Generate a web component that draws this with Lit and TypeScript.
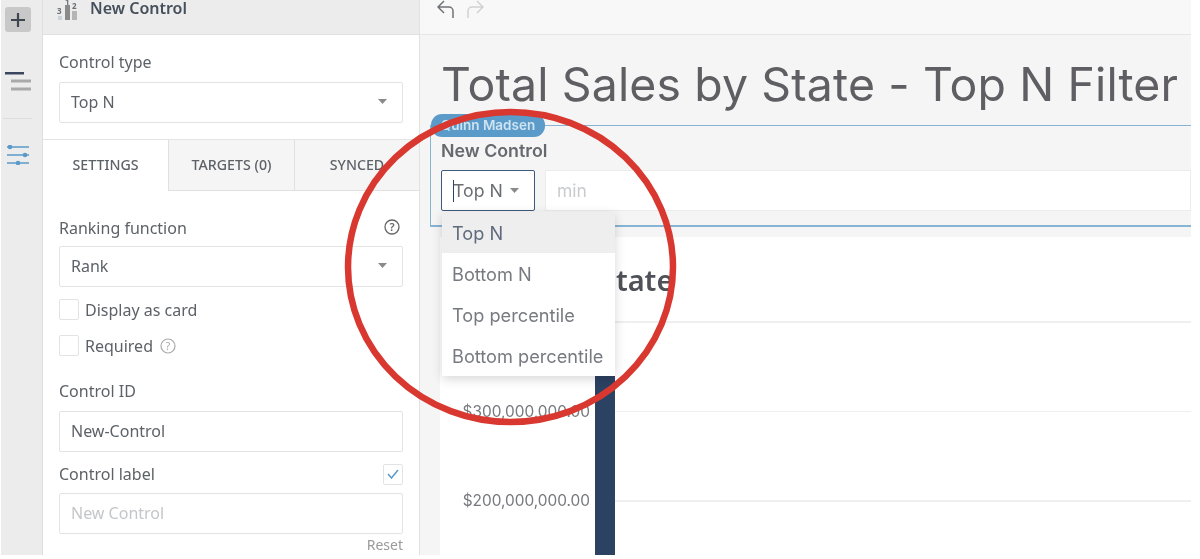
import { LitElement, html, css } from "lit";
import { customElement } from "lit/decorators.js";

const chevron = html`<svg class="caret" width="9" height="5" viewBox="0 0 9 5"><path d="M0 0h9L4.500 5z" fill="#8a8a8a"/></svg>`;

@customElement("app-root")
export class AppRoot extends LitElement {
  static styles = css`
    :host { display: block; width: 1200px; height: 559px; background: #fff; overflow: hidden; }
    * { box-sizing: border-box; }
    .page { position: relative; width: 1191px; height: 555px; display: grid; grid-template-columns: 43px 377px 771px; overflow: hidden; filter: blur(0.45px); font-family: "Noto Sans", sans-serif; color: #5f6368; }

    .rail { margin-left: 1px; background: #ececec; border-right: 1px solid #dfdfdf; display: flex; flex-direction: column; align-items: flex-start; padding: 7px 0 0 4px; }
    .plus { width: 26px; height: 25px; border-radius: 3px; background: #c8c8c8; display: flex; align-items: center; justify-content: center; }
    .rail-ic { display: block; margin-top: 40px; }
    .rail-sep { width: 29px; height: 1px; background: #dcdcdc; margin: 26px 0 0 -2px; }
    .rail-ic2 { display: block; margin: 26px 0 0 2px; }

    .panel { background: #fff; border-right: 1px solid #e2e2e2; display: flex; flex-direction: column; }
    .phead { height: 35px; flex: none; background: #ececec; border-bottom: 1px solid #e0e0e0; display: flex; align-items: flex-start; padding-left: 14px; gap: 12px; }
    .phead svg { margin-top: -1px; }
    .phead span { font-size: 16px; font-weight: 600; color: #46505c; line-height: 17px; }
    .sect { padding: 0 16px; display: flex; flex-direction: column; }
    .lab { font-size: 16px; line-height: 20px; color: #5d6268; }
    .field { height: 41px; border: 1px solid #e3e3e3; border-radius: 2px; display: flex; align-items: center; justify-content: space-between; padding: 0 11px 2px; font-size: 16px; color: #5d6268; background: #fff; }
    .caret { flex: none; margin-right: 4px; }
    .ph { color: #c4c6c9; }
    .top { padding-top: 17px; padding-bottom: 16px; gap: 10px; border-bottom: 1px solid #e4e4e4; height: 105px; }
    .tabs { display: grid; grid-template-columns: 125px 126px 125px; height: 51px; flex: none; font-size: 14.2px; font-weight: 500; }
    .tab { display: flex; align-items: center; justify-content: center; background: #f5f5f5; border-bottom: 1px solid #e0e0e0; border-left: 1px solid #e0e0e0; color: #5d6268; padding-bottom: 2px; }
    .tab.on { background: #fff; border: 0; }
    .body { padding-top: 27px; }
    .lab-row { display: flex; justify-content: space-between; align-items: center; height: 20px; }
    .help { margin-right: 2px; }
    .check { display: flex; align-items: center; gap: 6px; font-size: 16px; color: #5d6268; height: 21px; line-height: 20px; }
    .box { width: 20px; height: 21px; border: 1px solid #e3e3e3; border-radius: 2px; background: #fff; display: flex; align-items: center; justify-content: center; flex: none; }
    .g1 { margin-top: 8px; }
    .checks { margin-top: 12px; display: flex; flex-direction: column; gap: 15px; }
    .idlab { margin-top: 25px; margin-bottom: 10px; }
    .cl { margin-top: 12px; margin-bottom: 9px; }
    .reset { align-self: flex-end; font-size: 14px; color: #9a9a9a; line-height: 16px; margin-top: 3px; }

    .main { background: #f5f5f5; display: flex; flex-direction: column; font-family: Inter, sans-serif; min-width: 0; }
    .tool { height: 35px; flex: none; background: #f8f8f8; border-bottom: 1px solid #e6e6e6; display: flex; gap: 11px; padding: 0 0 0 17px; align-items: flex-start; }
    .title { font-size: 46.4px; font-weight: 400; line-height: 52px; color: #5f5f63; margin: 23px 0 0 21px; white-space: nowrap; letter-spacing: 0.15px; }
    .ctl { margin: 15px 0 0 10px; height: 102px; border: 1px solid #86b4d4; border-width: 2px 0 2px 1px; border-top-width: 1px; position: relative; padding: 15px 0 0 10px; }
    .badge { position: absolute; left: 0; top: -12px; width: 114px; height: 23px; background: #5a9bc9; border-radius: 11px; color: #cfe3f1; font-size: 13.5px; font-weight: 600; line-height: 22px; text-align: center; white-space: nowrap; }
    .cname { font-size: 17.8px; font-weight: 600; line-height: 19px; color: #66696e; }
    .inputs { display: flex; gap: 10px; margin-top: 10px; }
    .sel { width: 94px; height: 41px; background: #fff; border: 1px solid #3f5a7d; border-radius: 2px; font-size: 17.7px; color: #6a6e73; display: flex; align-items: center; gap: 7px; padding-left: 11px; position: relative; }
    .sel .cursor { position: absolute; left: 11px; top: 9px; width: 1px; height: 22px; background: #2c4263; }
    .sel .caret { margin: 0; }
    .minp { flex: 1; height: 41px; background: #fff; border: 1px solid #ececec; font-size: 17.5px; color: #c9cbce; display: flex; align-items: center; padding-left: 11px; }
    .card { margin: 10px 0 0 20px; flex: 1; background: #fff; padding: 23px 0 0 0; position: relative; min-height: 0; overflow: hidden; }
    .ctitle { font-family: "Noto Sans", sans-serif; font-size: 29px; font-weight: 600; line-height: 40px; color: #4e5258; padding-left: 39px; white-space: nowrap; }
    .plot { margin-top: 21px; display: flex; flex-direction: column; position: relative; }
    .row { height: 89.5px; display: grid; grid-template-columns: 150px 1fr; column-gap: 5px; align-items: start; }
    .row span { font-size: 15.4px; line-height: 18px; color: #77797d; text-align: right; margin-top: -8px; }
    .row i { display: block; height: 1.5px; background: #efefef; }
    .bar { position: absolute; left: 155px; top: 55px; width: 20px; height: 200px; background: #2c4263; }

    .menu { position: absolute; left: 442px; top: 212px; width: 173px; height: 164px; background: #fff; box-shadow: 0 3px 10px rgba(0,0,0,.16); font-family: Inter, sans-serif; font-size: 18.2px; color: #777a80; }
    .menu div { height: 41px; display: flex; align-items: center; padding-left: 10px; white-space: nowrap; }
    .menu div.on { background: #eeeeee; color: #5f6a7d; }
    .ring { position: absolute; left: 0; top: 0; pointer-events: none; }
  `;

  render() {
    return html`<div class="page">
      <nav class="rail">
        <div class="plus"><svg width="14" height="14" viewBox="0 0 14 14"><path d="M7 0v14M0 7h14" stroke="#3f4650" stroke-width="2.2"/></svg></div>
        <svg class="rail-ic" width="28" height="20" viewBox="0 0 28 20"><path d="M0 1h19" stroke="#3a4660" stroke-width="3"/><path d="M6 9h20M6 17h20" stroke="#a9a9a9" stroke-width="3"/></svg>
        <div class="rail-sep"></div>
        <svg class="rail-ic2" width="24" height="20" viewBox="0 0 24 20" fill="none" stroke="#5a9bc9" stroke-width="1.6"><path d="M0 2h22M0 10h22M0 18h22"/><circle cx="3" cy="2" r="1.5" fill="#5a9bc9"/><circle cx="18" cy="10" r="1.5" fill="#5a9bc9"/><circle cx="11" cy="18" r="1.500" fill="#5a9bc9"/></svg>
      </nav>

      <aside class="panel">
        <header class="phead">
          <svg width="21" height="21" viewBox="0 0 21 21"><g fill="#6b7076" font-family="Noto Sans, sans-serif" font-size="8" font-weight="700"><text x="0" y="15">3</text><text x="8" y="6">1</text><text x="15" y="10">2</text></g><rect x="8" y="6" width="5" height="15" fill="#8a8a8a"/><rect x="15" y="12" width="5" height="9" fill="#b5b5b5"/><rect x="1" y="17" width="4" height="4" fill="#c9d4dc"/></svg>
          <span>New Control</span>
        </header>
        <div class="sect top">
          <div class="lab">Control type</div>
          <div class="field">Top N ${chevron}</div>
        </div>
        <div class="tabs">
          <div class="tab on">SETTINGS</div>
          <div class="tab">TARGETS (0)</div>
          <div class="tab">SYNCED</div>
        </div>
        <div class="sect body">
          <div class="lab-row"><span class="lab">Ranking function</span>
            <svg class="help" width="18" height="18" viewBox="0 0 18 18" fill="none"><circle cx="9" cy="8" r="7" stroke="#666" stroke-width="1.3"/><text x="9" y="12" text-anchor="middle" font-size="11" font-weight="600" fill="#666" font-family="Noto Sans, sans-serif">?</text></svg>
          </div>
          <div class="field g1">Rank ${chevron}</div>
          <div class="checks">
            <div class="check"><span class="box"></span>Display as card</div>
            <div class="check"><span class="box"></span>Required
              <svg width="18" height="18" viewBox="0 0 18 18" fill="none"><circle cx="9" cy="9" r="7" stroke="#aaa" stroke-width="1.2"/><text x="9" y="13" text-anchor="middle" font-size="11" fill="#aaa" font-family="Noto Sans, sans-serif">?</text></svg>
            </div>
          </div>
          <div class="lab idlab">Control ID</div>
          <div class="field">New-Control</div>
          <div class="lab-row cl"><span class="lab">Control label</span>
            <span class="box"><svg width="12" height="10" viewBox="0 0 12 10" fill="none"><path d="M1 5l3.5 4L11 1" stroke="#5a9bc9" stroke-width="1.5"/></svg></span>
          </div>
          <div class="field ph">New Control</div>
          <div class="reset">Reset</div>
        </div>
      </aside>

      <main class="main">
        <div class="tool">
          <svg width="18" height="20" viewBox="0 0 18 20" fill="none" stroke="#6f7276" stroke-width="1.5"><path d="M7 1L1 7l6 6M1 7h11a4 4 0 0 1 4 4v7"/></svg>
          <svg width="18" height="20" viewBox="0 0 18 20" fill="none" stroke="#cfd1d3" stroke-width="1.5"><path d="M11 1l6 6-6 6M17 7H6a4 4 0 0 0-4 4v7"/></svg>
        </div>
        <h1 class="title">Total Sales by State - Top N Filter</h1>
        <section class="ctl">
          <div class="badge">Quinn Madsen</div>
          <div class="cname">New Control</div>
          <div class="inputs">
            <div class="sel"><span class="cursor"></span>Top N ${chevron}</div>
            <div class="minp">min</div>
          </div>
        </section>
        <section class="card">
          <div class="ctitle">Sales by State</div>
          <div class="plot">
            <div class="row"><span></span><i></i></div>
            <div class="row"><span>$300,000,000.00</span><i></i></div>
            <div class="row"><span>$200,000,000.00</span><i></i></div>
            <div class="bar"></div>
          </div>
        </section>
      </main>

      <div class="menu">
        <div class="on">Top N</div>
        <div>Bottom N</div>
        <div>Top percentile</div>
        <div>Bottom percentile</div>
      </div>
      <svg class="ring" width="1191" height="555" viewBox="0 0 1191 555" fill="none">
        <ellipse cx="510.500" cy="267" rx="162.500" ry="155" stroke="#d8382f" stroke-width="6.500"/>
      </svg>
    </div>`;
  }
}
